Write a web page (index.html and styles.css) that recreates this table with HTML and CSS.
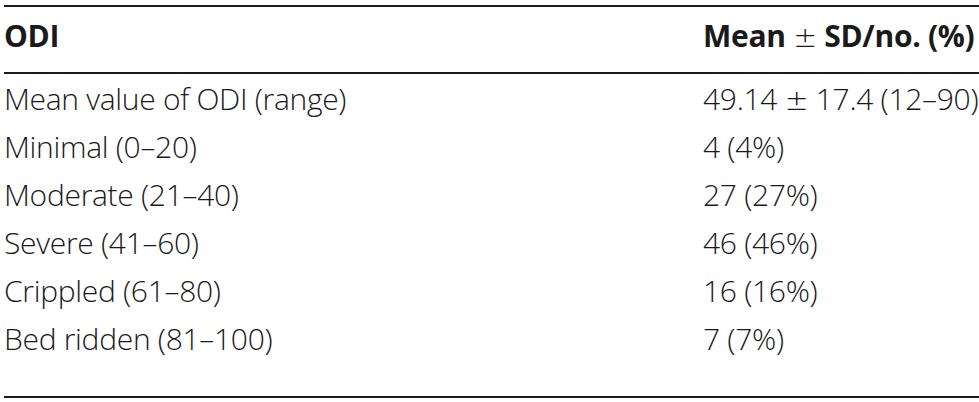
FILE: index.html
```html
<!DOCTYPE html>
<html>
<head>
<meta charset="utf-8">
<link rel="stylesheet" href="styles.css">
</head>
<body>
<table class="tbl">
  <thead>
    <tr><th class="c1">ODI</th><th class="c2">Mean <span class="pm">±</span> SD/no. (%)</th></tr>
  </thead>
  <tbody>
    <tr><td>Mean value of ODI (range)</td><td class="c2">49.14 <span class="pm">±</span> 17.4 (12–90)</td></tr>
    <tr><td>Minimal (0–20)</td><td class="c2">4 (4%)</td></tr>
    <tr><td>Moderate (21–40)</td><td class="c2">27 (27%)</td></tr>
    <tr><td>Severe (41–60)</td><td class="c2">46 (46%)</td></tr>
    <tr><td>Crippled (61–80)</td><td class="c2">16 (16%)</td></tr>
    <tr><td>Bed ridden (81–100)</td><td class="c2">7 (7%)</td></tr>
  </tbody>
</table>
</body>
</html>
```
FILE: styles.css
```css
html, body {
  margin: 0;
  padding: 0;
  background: #fff;
}
body {
  padding: 5px 0 0 4px;
  font-family: "Open Sans", "Liberation Sans", sans-serif;
  color: #1a1a1a;
}
.tbl {
  width: 975px;
  border-collapse: collapse;
  font-size: 30px;
  letter-spacing: -0.3px;
}
.tbl thead tr {
  border-top: 2px solid #1a1a1a;
  border-bottom: 2px solid #1a1a1a;
}
.tbl th {
  font-weight: 700;
  text-align: left;
  height: 57px;
  padding: 0 0 8px 0;
  vertical-align: middle;
}
.tbl td {
  font-weight: 300;
  height: 48px;
  padding: 0;
  vertical-align: middle;
}
.pm {
  font-family: "DejaVu Sans", sans-serif;
  font-weight: 300;
  font-size: 0.95em;
}
.tbl tbody tr:last-child {
  border-bottom: 2px solid #1a1a1a;
}
.tbl tbody tr:last-child td {
  padding-bottom: 34px;
}
.c1 { width: 699px; }
.c2 { width: 276px; }
```
